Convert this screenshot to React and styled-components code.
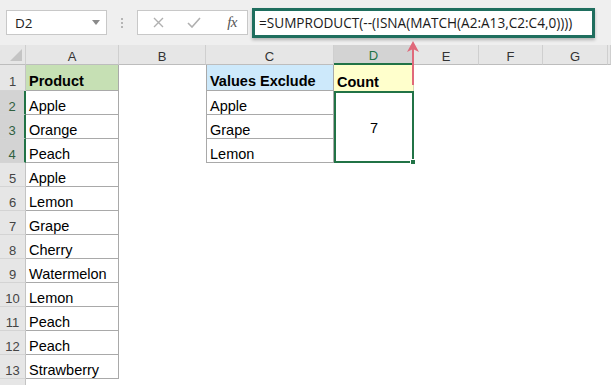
import React from "react";
import styled, { createGlobalStyle } from "styled-components";

const GlobalStyle = createGlobalStyle`
  html, body {
    margin: 0;
    padding: 0;
    background: #ffffff;
    overflow: hidden;
  }
  * { box-sizing: border-box; }
`;

const GREEN = "#217346";

const Page = styled.div`
  position: relative;
  width: 611px;
  height: 385px;
  overflow: hidden;
  background: #fff;
`;

const Toolbar = styled.div`
  display: flex;
  align-items: center;
  height: 45px;
  padding-left: 6px;
  background: #efefef;
`;

const NameBox = styled.div`
  display: flex;
  align-items: center;
  justify-content: space-between;
  width: 101px;
  height: 25px;
  padding: 0 6px 0 8px;
  background: #fff;
  border: 1px solid #c8c8c8;
  font-family: "Open Sans", "Noto Sans", sans-serif;
  font-size: 13.5px;
  color: #222;
`;

const Caret = styled.span`
  width: 0;
  height: 0;
  border-left: 4px solid transparent;
  border-right: 4px solid transparent;
  border-top: 5px solid #8a8a8a;
`;

const Grip = styled.div`
  display: flex;
  flex-direction: column;
  gap: 2px;
  margin-left: 14px;
  margin-right: 14px;
  span {
    width: 2px;
    height: 2px;
    background: #b5b5b5;
  }
`;

const ButtonBox = styled.div`
  display: flex;
  align-items: center;
  width: 111px;
  height: 25px;
  padding: 0 10px 0 15px;
  gap: 23px;
  background: #fff;
  border: 1px solid #c8c8c8;
`;

const Fx = styled.span`
  margin-left: auto;
  font-family: "Liberation Serif", serif;
  font-style: italic;
  font-size: 15px;
  color: #555;
  letter-spacing: -0.5px;
`;

const FormulaBox = styled.div`
  display: flex;
  align-items: center;
  width: 343px;
  height: 30px;
  margin-left: 4px;
  padding-left: 4px;
  background: #fff;
  border: 3px solid #1f6e5e;
  box-shadow: 0 2px 3px rgba(0, 0, 0, 0.25);
  font-family: "Open Sans", "Noto Sans", sans-serif;
  font-size: 13.6px;
  color: #1a1a1a;
  white-space: nowrap;
`;

const Sheet = styled.div`
  display: grid;
  grid-template-columns: 26px 93px 87px 128px 80px 65px 64px 65px 1fr;
  grid-template-rows: 20px 26px repeat(13, 24px);
  font-family: "Liberation Sans", Arial, sans-serif;
`;

const Corner = styled.div`
  position: relative;
  background: #e6e6e6;
  border-right: 1px solid #cfcfcf;
  border-bottom: 1px solid #bdbdbd;
  &::after {
    content: "";
    position: absolute;
    right: 3px;
    bottom: 3px;
    border-left: 12px solid transparent;
    border-bottom: 12px solid #c4c4c4;
  }
`;

const ColHead = styled.div`
  display: flex;
  align-items: center;
  justify-content: center;
  padding-top: 3px;
  font-size: 13px;
  background: ${(p) => (p.$active ? "#d3d3d3" : "#e6e6e6")};
  color: ${(p) => (p.$active ? GREEN : "#333")};
  border-right: 1px solid #cfcfcf;
  border-bottom: ${(p) => (p.$active ? `2px solid ${GREEN}` : "1px solid #bdbdbd")};
`;

const RowHead = styled.div`
  display: flex;
  align-items: center;
  justify-content: center;
  padding-top: 7px;
  font-size: 13px;
  background: ${(p) => (p.$active ? "#d3d3d3" : "#e6e6e6")};
  color: ${(p) => (p.$active ? "#2f5f3f" : "#444")};
  border-right: ${(p) => (p.$active ? `2px solid ${GREEN}` : "1px solid #c4c4c4")};
  border-bottom: 1px solid #d4d4d4;
`;

const Cell = styled.div`
  display: flex;
  align-items: center;
  padding: 7px 0 0 3px;
  font-size: 14.5px;
  font-weight: ${(p) => (p.$bold ? 700 : 400)};
  color: #000;
  white-space: nowrap;
  background: ${(p) => p.$bg || "#fff"};
  border-right: ${(p) => (p.$boxed ? "1px solid #a9a9a9" : "none")};
  border-bottom: ${(p) => (p.$boxed ? "1px solid #a9a9a9" : "none")};
  border-left: ${(p) => (p.$left ? "1px solid #a9a9a9" : "none")};
`;

const Merged = styled.div`
  position: relative;
  grid-row: span 3;
  display: flex;
  align-items: center;
  justify-content: center;
  padding-top: 2px;
  font-size: 14.5px;
  color: #000;
  border: 2px solid ${GREEN};
`;

const FillHandle = styled.span`
  position: absolute;
  right: -4px;
  bottom: -4px;
  width: 6px;
  height: 6px;
  background: ${GREEN};
  border: 1px solid #fff;
`;

const Arrow = styled.svg`
  position: absolute;
  left: 406px;
  top: 38px;
`;

const products = [
  "Apple", "Orange", "Peach", "Apple", "Lemon", "Grape",
  "Cherry", "Watermelon", "Lemon", "Peach", "Peach", "Strawberry",
];
const excludes = ["Apple", "Grape", "Lemon"];
const cols = ["A", "B", "C", "D", "E", "F", "G", ""];

export default function App() {
  const rows = [];

  // row 1 holds the two table headers
  rows.push(
    <React.Fragment key="r1">
      <RowHead>1</RowHead>
      <Cell $boxed $bold $bg="#c6e0b4">Product</Cell>
      <Cell />
      <Cell $boxed $left $bold $bg="#cde9fb">Values Exclude</Cell>
      <Cell $bold $bg="#ffffcc" style={{ borderRight: "1px solid #d8d8b0" }}>Count</Cell>
      <Cell />
      <Cell />
      <Cell />
      <Cell />
    </React.Fragment>
  );

  for (let i = 2; i <= 14; i++) {
    const product = products[i - 2];
    const exclude = excludes[i - 2];
    rows.push(
      <React.Fragment key={"r" + i}>
        <RowHead $active={i >= 2 && i <= 4}>{i < 14 ? i : ""}</RowHead>
        {product ? <Cell $boxed>{product}</Cell> : <Cell />}
        <Cell />
        {exclude ? <Cell $boxed $left>{exclude}</Cell> : <Cell />}
        {i === 2 && (
          <Merged>
            7
            <FillHandle />
          </Merged>
        )}
        {i > 4 && <Cell />}
        <Cell />
        <Cell />
        <Cell />
        <Cell />
      </React.Fragment>
    );
  }

  return (
    <Page>
      <GlobalStyle />
      <Toolbar>
        <NameBox>
          <span>D2</span>
          <Caret />
        </NameBox>
        <Grip>
          <span />
          <span />
          <span />
        </Grip>
        <ButtonBox>
          <svg width="11" height="11" viewBox="0 0 11 11">
            <path d="M1 1 L10 10 M10 1 L1 10" stroke="#b0b0b0" strokeWidth="1.4" />
          </svg>
          <svg width="14" height="11" viewBox="0 0 14 11">
            <path d="M1 6 L5 10 L13 1" stroke="#b0b0b0" strokeWidth="1.6" fill="none" />
          </svg>
          <Fx>fx</Fx>
        </ButtonBox>
        <FormulaBox>=SUMPRODUCT(--(ISNA(MATCH(A2:A13,C2:C4,0))))</FormulaBox>
      </Toolbar>
      <Sheet>
        <Corner />
        {cols.map((c) => (
          <ColHead key={c || "x"} $active={c === "D"}>{c}</ColHead>
        ))}
        {rows}
      </Sheet>
      <Arrow width="14" height="50" viewBox="0 0 14 50">
        <line x1="7" y1="8" x2="7" y2="47" stroke="#e0697a" strokeWidth="2" />
        <path d="M7 3 L13 14 L7 11 L1 14 Z" fill="#e0697a" />
      </Arrow>
    </Page>
  );
}
